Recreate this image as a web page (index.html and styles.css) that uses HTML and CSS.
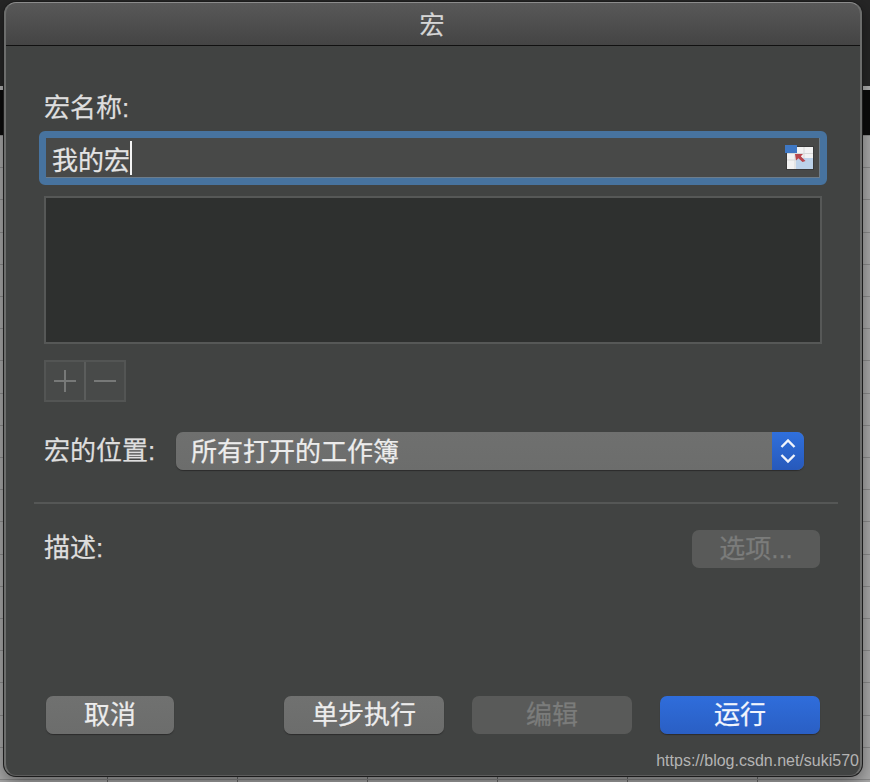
FILE: index.html
```html
<!DOCTYPE html>
<html lang="zh">
<head>
<meta charset="utf-8">
<title>宏</title>
<link rel="stylesheet" href="styles.css">
</head>
<body>
<div class="dialog">
  <header class="titlebar">宏</header>
  <main class="content">
    <div class="name-label">宏名称:</div>
    <div class="name-field">
      <span class="name-value">我的宏</span><span class="caret"></span>
      <svg class="ref-icon" width="30" height="26" viewBox="0 0 30 26">
        <rect x="1" y="1" width="28" height="24" fill="#3a3a3a"/>
        <rect x="2" y="2" width="26" height="22" fill="#f2f2f2"/>
        <path d="M2 8.5H28M2 15H28M10 2V24M19 2V24" stroke="#d8d8d8" stroke-width="1"/>
        <rect x="11" y="13" width="17" height="11" fill="#bcd2ea"/>
        <rect x="0" y="0" width="12" height="8" fill="#3f78c4"/>
        <path d="M10 9H18L15.8 11.2 20.5 16 17.5 17 13.4 13.2 11 15.5Z" fill="#b8464c"/>
      </svg>
    </div>
    <div class="macro-list"></div>
    <div class="stepper">
      <span class="step-cell">
        <svg width="24" height="24" viewBox="0 0 24 24"><path d="M12 1V23M1 12H23" stroke="#777978" stroke-width="2"/></svg>
      </span>
      <span class="step-cell">
        <svg width="24" height="24" viewBox="0 0 24 24"><path d="M1 12H23" stroke="#777978" stroke-width="2"/></svg>
      </span>
    </div>
    <div class="location-row">
      <span class="row-label">宏的位置:</span>
      <div class="select">
        <span class="select-value">所有打开的工作簿</span>
        <span class="select-arrows">
          <svg width="18" height="30" viewBox="0 0 18 30"><path d="M2.5 11L9 4.5 15.5 11M2.5 19L9 25.5 15.5 19" fill="none" stroke="#f1f4fb" stroke-width="2.4"/></svg>
        </span>
      </div>
    </div>
    <hr class="divider">
    <div class="desc-row">
      <span class="row-label">描述:</span>
      <button class="btn btn-disabled btn-options">选项...</button>
    </div>
    <div class="actions">
      <button class="btn btn-cancel">取消</button>
      <div class="actions-right">
        <button class="btn btn-wide">单步执行</button>
        <button class="btn btn-wide btn-disabled">编辑</button>
        <button class="btn btn-wide btn-primary">运行</button>
      </div>
    </div>
  </main>
  <div class="watermark">https://blog.csdn.net/suki570</div>
</div>
</body>
</html>
```

FILE: styles.css
```css
* { box-sizing: border-box; }
html, body { margin: 0; height: 100%; }
body {
  width: 870px;
  height: 782px;
  overflow: hidden;
  padding: 2px 8px 6px 4px;
  font-family: "Liberation Sans", "Noto Sans CJK SC", sans-serif;
  background-color: #a9a9a9;
  background-image:
    linear-gradient(#262626 0, #262626 86px, #b0b0b0 86px, #b0b0b0 90px, #0c0c0c 90px, #0c0c0c 135px, transparent 135px),
    repeating-linear-gradient(#8a8a8a 0, #8a8a8a 1px, transparent 1px, transparent 32.2px),
    repeating-linear-gradient(90deg, #666 0, #666 1px, transparent 1px, transparent 130px);
  background-position: 0 0, 0 135px, 107px 0;
  background-repeat: no-repeat, no-repeat, no-repeat;
}
.dialog {
  position: relative;
  width: 858px;
  height: 774px;
  background: #414342;
  border-radius: 12px;
  box-shadow: 0 0 0 1px #1c1c1c, 0 6px 18px rgba(0, 0, 0, 0.45);
  overflow: hidden;
  color: #dedede;
}
.dialog::after {
  content: "";
  position: absolute;
  inset: 0;
  border: 2px solid #6c6d6c;
  border-top: 1px solid #8c8c8c;
  border-bottom: 1px solid #5c5c5c;
  border-radius: 12px;
  pointer-events: none;
}
.titlebar {
  height: 44px;
  padding-top: 5px;
  padding-right: 2px;
  text-align: center;
  font-size: 25px;
  line-height: 36px;
  color: #d6d6d6;
  background: linear-gradient(#595959, #444);
  border-bottom: 1px solid #111;
  -webkit-text-stroke: 0.2px currentColor;
}
.content {
  padding: 0 40px;
  -webkit-text-stroke: 0.25px currentColor;
}
.name-label {
  margin-top: 44px;
  height: 36px;
  font-size: 26px;
  line-height: 36px;
}
.name-field {
  display: flex;
  align-items: center;
  width: 788px;
  height: 54px;
  margin: 5px 0 0 -5px;
  padding: 0 5px 0 6px;
  background: #484948;
  border: 7px solid #47739f;
  border-radius: 6px;
  box-shadow: inset 0 -1px 0 #6d7d8c, inset -1px 0 0 #6d7d8c;
  font-size: 26px;
  color: #e4e4e4;
}
.caret {
  width: 2px;
  height: 34px;
  margin-left: 0;
  background: #f4f4f4;
}
.ref-icon { margin-left: auto; }
.macro-list {
  height: 148px;
  margin-top: 11px;
  width: 778px;
  background: #2e302f;
  border: 2px solid #565857;
}
.stepper {
  display: flex;
  width: 82px;
  height: 42px;
  margin-top: 16px;
  border: 2px solid #535554;
  background: #484a49;
}
.step-cell {
  flex: 1;
  display: flex;
  align-items: center;
  justify-content: center;
}
.step-cell + .step-cell { border-left: 2px solid #5b5d5c; }
.location-row {
  display: flex;
  align-items: center;
  justify-content: space-between;
  width: 760px;
  margin-top: 30px;
}
.row-label {
  font-size: 26px;
  line-height: 36px;
  color: #dedede;
}
.select {
  display: flex;
  width: 628px;
  height: 38px;
  background: linear-gradient(#6f706f, #6c6d6c);
  border-radius: 7px;
  overflow: hidden;
  box-shadow: 0 1px 1px #2c2c2c;
}
.select-value {
  flex: 1;
  padding-left: 15px;
  font-size: 26px;
  line-height: 41px;
  color: #ececec;
}
.select-arrows {
  display: flex;
  width: 32px;
  align-items: center;
  justify-content: center;
  background: linear-gradient(#3070dc, #2759bb);
}
.divider {
  width: 804px;
  height: 2px;
  margin: 32px 0 0 -10px;
  border: 0;
  background: #555756;
}
.desc-row {
  display: flex;
  justify-content: space-between;
  align-items: flex-start;
  width: 776px;
  margin-top: 26px;
}
.btn {
  height: 38px;
  padding: 0;
  border: 0;
  border-radius: 7px;
  font-family: inherit;
  font-size: 26px;
  line-height: 38px;
  color: #ececec;
  background: linear-gradient(#707170, #6c6d6c);
  box-shadow: 0 1px 1px #2c2c2c;
  -webkit-text-stroke: 0.25px currentColor;
}
.btn-disabled {
  color: #7b7c7b;
  background: #595a59;
  box-shadow: none;
}
.btn-options { width: 128px; }
.actions {
  display: flex;
  justify-content: space-between;
  width: 774px;
  margin: 128px 0 0 2px;
}
.btn-cancel { width: 128px; }
.actions-right { display: flex; gap: 28px; }
.btn-wide { width: 160px; }
.btn.btn-primary {
  color: #f1f5fd;
  background: linear-gradient(#2f6ddb, #2a5fc4);
}
.watermark {
  position: absolute;
  right: 3px;
  bottom: 3px;
  font-size: 16px;
  line-height: 24px;
  color: #b4b4b4;
  z-index: 1;
}
```
